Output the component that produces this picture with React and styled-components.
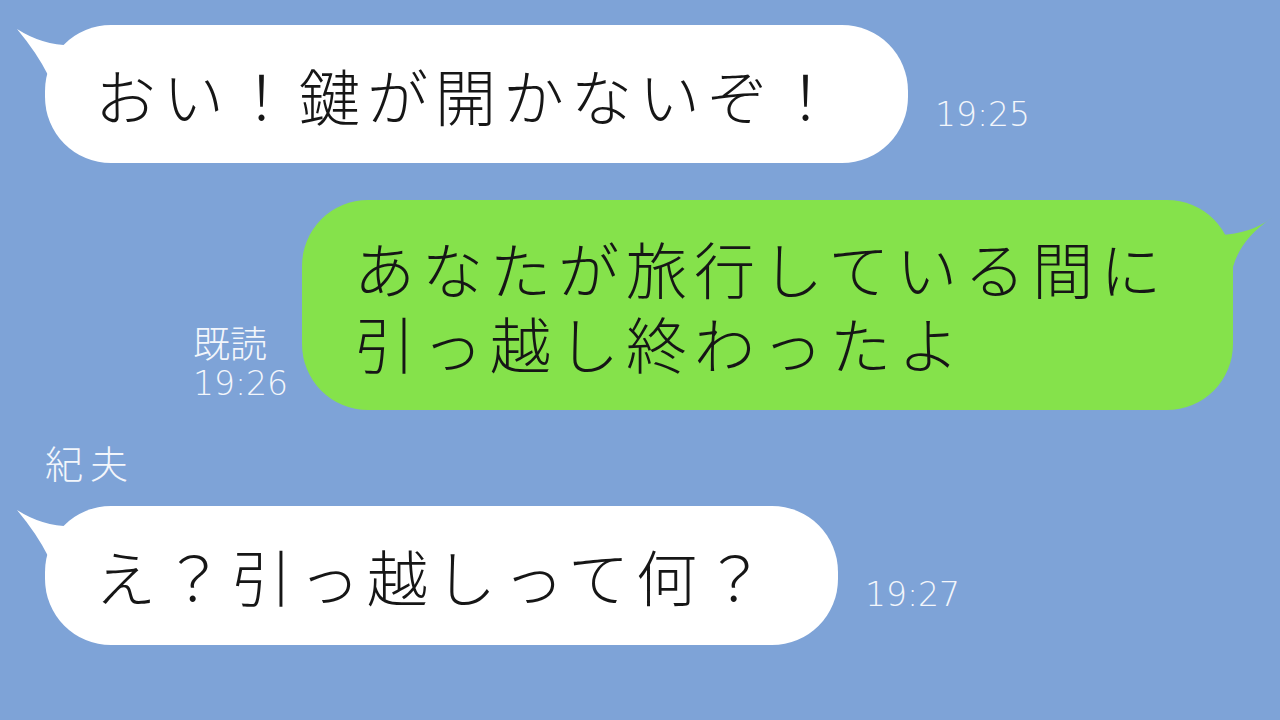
import React from "react";
import styled, { createGlobalStyle } from "styled-components";

const Global = createGlobalStyle`
  html, body { margin: 0; padding: 0; }
  body {
    width: 1280px;
    height: 720px;
    overflow: hidden;
    background: #7ea3d7;
    font-family: "Noto Sans CJK JP", "Noto Sans", sans-serif;
  }
`;

const Screen = styled.div`
  width: 1280px;
  height: 720px;
  background: #7ea3d7;
  display: flex;
  flex-direction: column;
  padding-top: 25px;
  box-sizing: border-box;
`;

const Row = styled.div`
  display: flex;
  align-items: flex-end;
  justify-content: ${(p) => (p.$mine ? "flex-end" : "flex-start")};
  padding: ${(p) => (p.$mine ? "0 47px 0 0" : "0 0 0 45px")};
  margin-top: ${(p) => p.$mt || 0}px;
  gap: ${(p) => (p.$mine ? 14 : 27)}px;
`;

const Bubble = styled.div`
  position: relative;
  box-sizing: border-box;
  height: ${(p) => p.$h}px;
  width: ${(p) => p.$w}px;
  padding-left: ${(p) => p.$pl}px;
  display: flex;
  flex-direction: column;
  justify-content: center;
  background: ${(p) => (p.$mine ? "#85e24b" : "#ffffff")};
  border-radius: 66px;
  color: #161616;
  font-size: 61px;
  letter-spacing: 7px;
  line-height: 75px;
  white-space: nowrap;
  font-weight: 300;
`;

const Tail = styled.svg`
  position: absolute;
  top: 0;
  ${(p) => (p.$mine ? "right: -40px;" : "left: -30px;")}
  width: 62px;
  height: 62px;
  overflow: visible;
`;

const Message = styled.div``;

const Time = styled.div`
  color: #f3f6fb;
  font-family: "DejaVu Sans", "Liberation Sans", sans-serif;
  font-weight: 200;
  font-size: 33px;
  line-height: 40px;
  margin-bottom: ${(p) => p.$mb || 0}px;
`;

const Receipt = styled.div`
  display: flex;
  flex-direction: column;
  color: #f3f6fb;
  margin-bottom: 6px;
`;

const ReadLabel = styled.div`
  font-family: "Noto Sans CJK JP", sans-serif;
  font-weight: 300;
  font-size: 37px;
  line-height: 44px;
`;

const Name = styled.div`
  color: #f3f6fb;
  font-family: "Noto Sans CJK JP", sans-serif;
  font-weight: 300;
  font-size: 38px;
  letter-spacing: 7px;
  line-height: 46px;
  padding-left: 45px;
  margin-top: 29px;
`;

function LeftTail() {
  return (
    <Tail viewBox="0 0 62 62">
      <path d="M2 4 Q30 22 62 20 L62 62 L33 62 L33 50 Q22 28 2 4 Z" fill="#ffffff" />
    </Tail>
  );
}

function RightTail() {
  return (
    <Tail $mine viewBox="0 0 62 62">
      <path d="M62 17 Q40 34 9 35 L0 35 L0 72 L22 72 L22 67 Q30 38 62 17 Z" fill="#85e24b" />
    </Tail>
  );
}

export default function App() {
  return (
    <>
      <Global />
      <Screen>
        <Row>
          <Bubble $h={138} $w={863} $pl={50}>
            <LeftTail />
            <Message>おい！鍵が開かないぞ！</Message>
          </Bubble>
          <Time $mb={28}>19:25</Time>
        </Row>
        <Row $mine $mt={37}>
          <Receipt>
            <ReadLabel>既読</ReadLabel>
            <Time>19:26</Time>
          </Receipt>
          <Bubble $mine $h={210} $w={931} $pl={52}>
            <RightTail />
            <Message>
              あなたが旅行している間に
              <br />
              引っ越し終わったよ
            </Message>
          </Bubble>
        </Row>
        <Name>紀夫</Name>
        <Row $mt={21}>
          <Bubble $h={139} $w={793} $pl={50}>
            <LeftTail />
            <Message>え？引っ越しって何？</Message>
          </Bubble>
          <Time $mb={30}>19:27</Time>
        </Row>
      </Screen>
    </>
  );
}
